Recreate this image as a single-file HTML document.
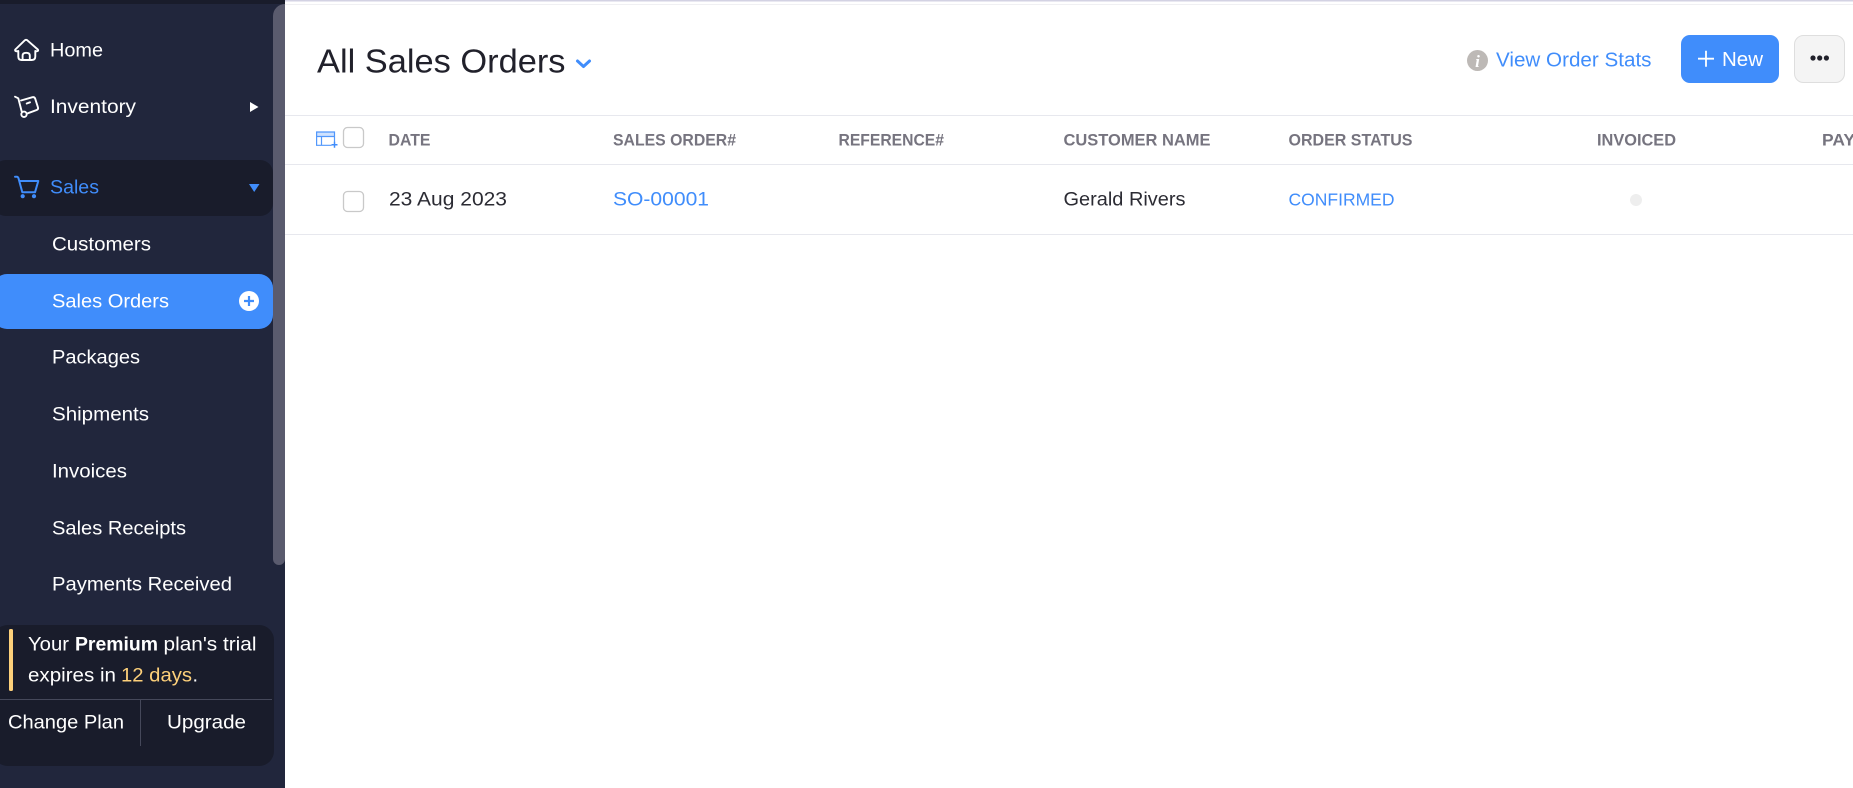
<!DOCTYPE html>
<html lang="en">
<head>
<meta charset="utf-8">
<title>All Sales Orders</title>
<style>
html,body{margin:0;padding:0;width:1853px;height:788px;overflow:hidden;background:#fff}
svg{display:block}
text{font-family:"Liberation Sans",sans-serif}
.n{font-size:19.800px;fill:#fff}
.h{font-size:16.500px;font-weight:700;fill:#76747f}
.r{font-size:19.500px;fill:#2b2b33}
</style>
</head>
<body>
<svg width="1853" height="788" viewBox="0 0 1853 788" xmlns="http://www.w3.org/2000/svg">
<defs><clipPath id="c"><rect x="285" y="0" width="1568" height="788"/></clipPath></defs>
<!-- sidebar -->
<rect x="0" y="0" width="285" height="788" fill="#21263c"/>
<rect x="0" y="0" width="285" height="4" fill="#191c2b"/>
<path d="M273 16a12 12 0 0 1 12-12v555a6 6 0 0 1-6 6a6 6 0 0 1-6-6z" fill="#5a5b6e"/>
<rect x="-7" y="160" width="280" height="56" rx="13" fill="#191c2b"/>
<rect x="-7" y="274" width="280" height="55" rx="14" fill="#408dfb"/>
<rect x="-7" y="625" width="281" height="141" rx="15" fill="#191c2b"/>
<rect x="9" y="629" width="4" height="62" rx="1.500" fill="#fdd07a"/>
<rect x="0" y="699" width="272" height="1" fill="#45485a"/>
<rect x="140" y="700" width="1" height="46" fill="#45485a"/>

<!-- sidebar icons -->
<g fill="none" stroke="#fff" stroke-width="1.900" stroke-linecap="round" stroke-linejoin="round">
<path d="M15.300 49.500L24.800 40.300Q26 39.300 27.300 40.300L37.800 49.500C38.800 50.800 37.500 51.700 35.300 51V56.500Q35.300 60 31.800 60H21.500Q18.300 60 18.300 56.500V51C16 51.700 14.500 50.800 15.300 49.500Z"/>
<path d="M22.600 60V55.500Q22.600 52.800 26.200 52.800Q29.800 52.800 29.800 55.500V60"/>
<path d="M15 96.700L18.300 98.300L21.700 111.500"/>
<circle cx="24" cy="114.300" r="2.700"/>
<path d="M21 100.500L32.500 97.200Q34.500 96.700 35.200 98.700L38 107.500Q38.500 109.300 36.700 110L27.700 113.300"/>
<path d="M26.700 103.500L30 102.300"/>
</g>
<g fill="none" stroke="#408dfb" stroke-width="2" stroke-linecap="round" stroke-linejoin="round">
<path d="M15 176.700H16.800Q18 176.700 18.500 178.300L22.300 192.300H35L38.300 181H20"/>
</g>
<circle cx="22.700" cy="196.200" r="2.100" fill="#408dfb"/>
<circle cx="34" cy="196.200" r="2.100" fill="#408dfb"/>
<path d="M250 102L258.500 107L250 112Z" fill="#fff"/>
<path d="M249 184H259.500L254.200 192Z" fill="#408dfb"/>
<circle cx="249" cy="301" r="10" fill="#fff"/>
<path d="M244 301H254M249 296V306" stroke="#408dfb" stroke-width="2.200" fill="none"/>

<!-- sidebar text -->
<text class="n" x="50" y="56.500" textLength="53" lengthAdjust="spacingAndGlyphs">Home</text>
<text class="n" x="50" y="113" textLength="86" lengthAdjust="spacingAndGlyphs">Inventory</text>
<text class="n" x="50" y="193.500" textLength="49" lengthAdjust="spacingAndGlyphs" style="fill:#408dfb">Sales</text>
<text class="n" x="52" y="250.500" textLength="99" lengthAdjust="spacingAndGlyphs">Customers</text>
<text class="n" x="52" y="307.500" textLength="117" lengthAdjust="spacingAndGlyphs">Sales Orders</text>
<text class="n" x="52" y="363.500" textLength="88" lengthAdjust="spacingAndGlyphs">Packages</text>
<text class="n" x="52" y="420.500" textLength="97" lengthAdjust="spacingAndGlyphs">Shipments</text>
<text class="n" x="52" y="477.500" textLength="75" lengthAdjust="spacingAndGlyphs">Invoices</text>
<text class="n" x="52" y="534.500" textLength="134" lengthAdjust="spacingAndGlyphs">Sales Receipts</text>
<text class="n" x="52" y="590.500" textLength="180" lengthAdjust="spacingAndGlyphs">Payments Received</text>
<text class="n" x="28" y="650.500" textLength="41" lengthAdjust="spacingAndGlyphs">Your</text>
<text class="n" x="75" y="650.500" textLength="83" lengthAdjust="spacingAndGlyphs" font-weight="700">Premium</text>
<text class="n" x="163.500" y="650.500" textLength="93" lengthAdjust="spacingAndGlyphs">plan's trial</text>
<text class="n" x="28" y="681.500" textLength="88" lengthAdjust="spacingAndGlyphs">expires in</text>
<text class="n" x="121" y="681.500" textLength="71" lengthAdjust="spacingAndGlyphs" font-weight="500" style="fill:#fdd07a">12 days</text>
<text class="n" x="192.500" y="681.500">.</text>
<text class="n" x="8" y="728.500" textLength="116" lengthAdjust="spacingAndGlyphs">Change Plan</text>
<text class="n" x="167" y="728.500" textLength="79" lengthAdjust="spacingAndGlyphs">Upgrade</text>

<!-- main -->
<rect x="285" y="0" width="1568" height="1.500" fill="#d3d2e3"/>
<rect x="285" y="4" width="1568" height="1" fill="#f0f0f3"/>
<rect x="285" y="115" width="1568" height="1" fill="#e7e8ee"/>
<rect x="285" y="164" width="1568" height="1" fill="#e7e8ee"/>
<rect x="285" y="234" width="1568" height="1" fill="#e7e8ee"/>

<text x="317" y="72.500" textLength="248.500" lengthAdjust="spacingAndGlyphs" font-size="33" fill="#21212b">All Sales Orders</text>
<path d="M577.500 61L583.500 66.500L589.500 61" fill="none" stroke="#408dfb" stroke-width="3" stroke-linecap="round" stroke-linejoin="round"/>

<!-- column icon -->
<rect x="317" y="132" width="18" height="4" fill="#408dfb" opacity=".25"/>
<g fill="none" stroke="#408dfb" stroke-width="1.200" opacity=".9">
<path d="M334.500 142V132H316.600V145.300H331.500"/>
<path d="M317 136.500H334.500M321.500 136.500V145"/>
</g>
<path d="M331.500 144.700H337.500M334.500 141.700V147.700" stroke="#408dfb" stroke-width="1.500" fill="none"/>

<rect x="343.500" y="127.500" width="20" height="20" rx="4" fill="#fff" stroke="#c9c9c9" stroke-width="1.300"/>
<rect x="343.500" y="191.500" width="20" height="20" rx="4" fill="#fff" stroke="#c9c9c9" stroke-width="1.300"/>

<!-- header text -->
<text class="h" x="388.500" y="145.500" textLength="42" lengthAdjust="spacingAndGlyphs">DATE</text>
<text class="h" x="613" y="145.500" textLength="123" lengthAdjust="spacingAndGlyphs">SALES ORDER#</text>
<text class="h" x="838.500" y="145.500" textLength="105.500" lengthAdjust="spacingAndGlyphs">REFERENCE#</text>
<text class="h" x="1063.500" y="145.500" textLength="147" lengthAdjust="spacingAndGlyphs">CUSTOMER NAME</text>
<text class="h" x="1288.500" y="145.500" textLength="124" lengthAdjust="spacingAndGlyphs">ORDER STATUS</text>
<text class="h" x="1597" y="145.500" textLength="79" lengthAdjust="spacingAndGlyphs">INVOICED</text>
<g clip-path="url(#c)"><text class="h" x="1822" y="145.500" textLength="33" lengthAdjust="spacingAndGlyphs">PAY</text></g>

<!-- row -->
<text class="r" x="389" y="205.500" textLength="118" lengthAdjust="spacingAndGlyphs">23 Aug 2023</text>
<text class="r" x="613" y="205.500" textLength="96" lengthAdjust="spacingAndGlyphs" style="fill:#408dfb">SO-00001</text>
<text class="r" x="1063.500" y="205.500" textLength="122" lengthAdjust="spacingAndGlyphs">Gerald Rivers</text>
<text x="1288.500" y="205.500" textLength="106" lengthAdjust="spacingAndGlyphs" font-size="17.500" fill="#408dfb">CONFIRMED</text>
<circle cx="1636" cy="200" r="6" fill="#eeeeee"/>

<!-- header right -->
<circle cx="1477.500" cy="60.500" r="10.500" fill="#bdb9b6"/>
<text x="1477.500" y="67" text-anchor="middle" font-size="17" font-weight="700" font-style="italic" fill="#fff" style="font-family:'Liberation Serif',serif">i</text>
<text x="1496" y="66.500" textLength="155.500" lengthAdjust="spacingAndGlyphs" font-size="20.500" fill="#408dfb">View Order Stats</text>

<rect x="1681" y="35" width="98" height="48" rx="9" fill="#408dfb"/>
<path d="M1698 58.700H1714M1706 50.700V66.700" stroke="#fff" stroke-width="1.800" fill="none"/>
<text x="1722" y="66" textLength="41" lengthAdjust="spacingAndGlyphs" font-size="20.500" fill="#fff">New</text>

<rect x="1794.500" y="35.500" width="50" height="47" rx="9" fill="#f4f4f4" stroke="#dedede"/>
<circle cx="1813" cy="58" r="2.600" fill="#21212b"/>
<circle cx="1819.700" cy="58" r="2.600" fill="#21212b"/>
<circle cx="1826.400" cy="58" r="2.600" fill="#21212b"/>
</svg>
</body>
</html>
